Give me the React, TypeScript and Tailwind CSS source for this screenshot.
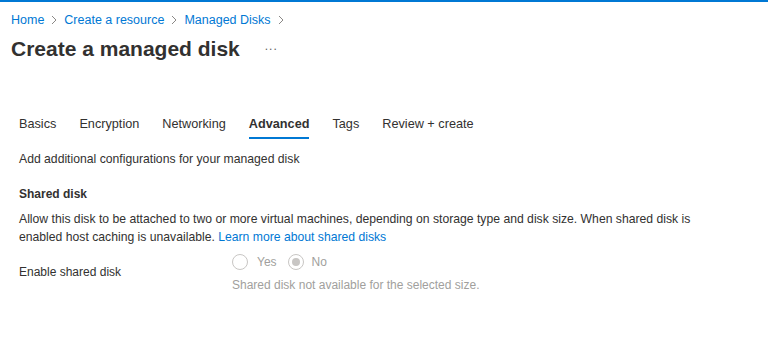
import React from "react"

const tabs = ["Basics", "Encryption", "Networking", "Advanced", "Tags", "Review + create"]

function Chevron() {
  return (
    <svg width="6" height="10" viewBox="0 0 6 10" className="mx-[7px]" fill="none">
      <path d="M1 1l4 4-4 4" stroke="#8a8886" strokeWidth="1" />
    </svg>
  )
}

function Radio({ checked }: { checked?: boolean }) {
  return (
    <span className="flex h-4 w-4 items-center justify-center rounded-full border border-[#c8c6c4]">
      {checked && <span className="h-2 w-2 rounded-full bg-[#c8c6c4]" />}
    </span>
  )
}

export default function App() {
  return (
    <div
      className="h-[339px] w-full border-t-2 border-[#0078d4] bg-white text-[#323130]"
      style={{ fontFamily: '"Liberation Sans", Arial, sans-serif' }}
    >
      {/* breadcrumb + title */}
      <div className="px-[11px] pt-[10px]">
        <nav className="flex h-[16px] items-center text-[12.5px] text-[#0078d4]">
          <span>Home</span>
          <Chevron />
          <span>Create a resource</span>
          <Chevron />
          <span>Managed Disks</span>
          <Chevron />
        </nav>
        <div className="mt-[7px] flex h-[26px] items-center">
          <h1 className="text-[21px] font-semibold leading-none">Create a managed disk</h1>
          <span className="ml-[25px] pb-[4px] text-[12px] tracking-[1px] text-[#605e5c]">...</span>
        </div>
      </div>

      {/* tabs */}
      <div className="mt-[52px] flex gap-[23px] px-[19px] text-[12.7px]">
        {tabs.map((t) => {
          const active = t === "Advanced"
          return (
            <div key={t} className="flex flex-col">
              <span className={`h-[22px] leading-[22px] ${active ? "font-semibold" : ""}`}>{t}</span>
              <span className={`mt-[2px] h-[2px] ${active ? "bg-[#0078d4]" : "bg-transparent"}`} />
            </div>
          )
        })}
      </div>

      <div className="px-[19px]">
        <p className="mt-[11px] text-[12.2px] leading-[18px]">Add additional configurations for your managed disk</p>

        <h2 className="mt-[17px] text-[12px] font-semibold leading-[18px]">Shared disk</h2>

        <p className="mt-[7px] max-w-[700px] text-[12.2px] leading-[18px]">
          Allow this disk to be attached to two or more virtual machines, depending on storage type and disk size. When
          shared disk is enabled host caching is unavailable. <span className="text-[#0078d4]">Learn more about shared disks</span>
        </p>

        <div className="mt-[6px] flex">
          <div className="w-[213px] pt-[11px] text-[12px] leading-[18px]">Enable shared disk</div>
          <div className="flex flex-col text-[12px] text-[#a19f9d]">
            <div className="flex h-[20px] items-center">
              <Radio />
              <span className="ml-[9px]">Yes</span>
              <span className="ml-[11px]">
                <Radio checked />
              </span>
              <span className="ml-[8px]">No</span>
            </div>
            <div className="mt-[4px] leading-[18px]">Shared disk not available for the selected size.</div>
          </div>
        </div>
      </div>
    </div>
  )
}
